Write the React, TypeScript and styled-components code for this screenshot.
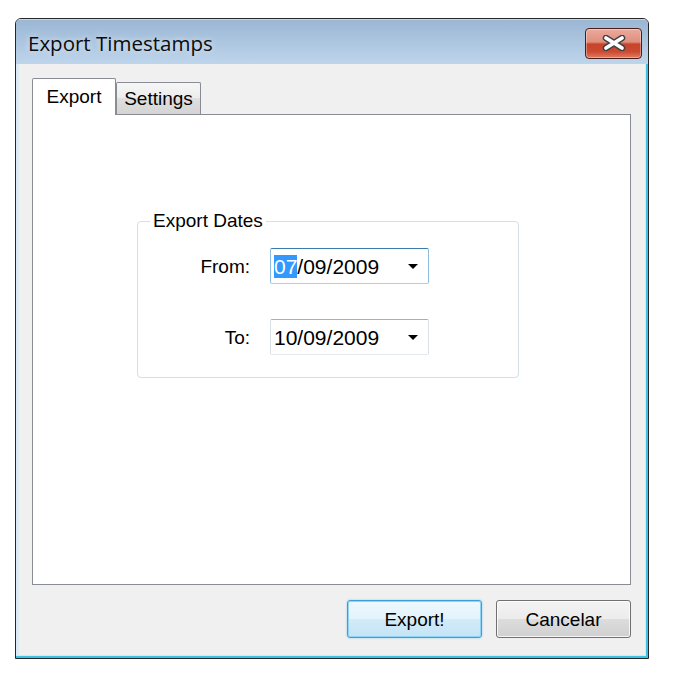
import React from "react";
import styled, { createGlobalStyle, css } from "styled-components";

const Global = createGlobalStyle`
  html, body { margin: 0; padding: 0; background: #fff; }
  body { font-family: "Liberation Sans", Arial, sans-serif; color: #000; }
  * { box-sizing: border-box; }
`;

const Page = styled.div`
  padding: 18px 0 0 15px;
`;

const Window = styled.div`
  width: 634px;
  height: 641px;
  border: 1px solid #262626;
  border-radius: 6px 6px 0 0;
  display: flex;
  flex-direction: column;
  overflow: hidden;
  background: #f0f0f0;
`;

const TitleBar = styled.div`
  height: 45px;
  flex: none;
  display: flex;
  align-items: center;
  justify-content: space-between;
  padding: 3px 6px 0 12px;
  background: linear-gradient(#9ab6d4, #bed5eb);
  box-shadow: inset 0 1px 0 rgba(255, 255, 255, 0.45);
`;

const Title = styled.div`
  font-family: "Open Sans", "Noto Sans", sans-serif;
  font-size: 20.5px;
  color: #0c0c0c;
  text-shadow: 0 0 6px rgba(255, 255, 255, 0.7);
`;

const CloseButton = styled.div`
  width: 57px;
  height: 31px;
  border: 1px solid #4a1d1d;
  border-radius: 4px;
  display: flex;
  align-items: center;
  justify-content: center;
  background: linear-gradient(
    #eaaa9c 0%,
    #df8f7d 45%,
    #c7432a 52%,
    #cb4a30 78%,
    #e07d62 100%
  );
  box-shadow: inset 0 0 0 1px rgba(255, 255, 255, 0.35);
`;

const Client = styled.div`
  flex: 1;
  display: flex;
  flex-direction: column;
  padding: 14px 17px 20px 16px;
  box-shadow: inset 0 -2px 0 #39c3e6, inset -2px 0 0 #39c3e6,
    inset 0 -3px 0 #d9e7f4, inset -3px 0 0 #d9e7f4, inset 3px 0 0 #dde9f5;
`;

const TabStrip = styled.div`
  display: flex;
  align-items: flex-end;
  height: 36px;
  flex: none;
  position: relative;
  z-index: 1;
`;

const Tab = styled.div<{ $active?: boolean }>`
  display: flex;
  align-items: center;
  justify-content: center;
  font-size: 19px;
  border: 1px solid #898c95;
  border-bottom: none;
  border-radius: 2px 2px 0 0;
  ${(p) =>
    p.$active
      ? css`
          width: 84px;
          height: 37px;
          margin-bottom: -1px;
          background: #fff;
          padding-bottom: 1px;
        `
      : css`
          width: 85px;
          height: 32px;
          background: linear-gradient(#f6f6f6, #ececec 50%, #dfdfdf 50%, #d4d4d4);
        `}
`;

const Panel = styled.div`
  flex: none;
  width: 599px;
  height: 471px;
  background: #fff;
  border: 1px solid #898c95;
`;

const Group = styled.fieldset`
  margin: 95px 0 0 104px;
  padding: 16px 0 0 0;
  width: 382px;
  height: 168px;
  border: 1px solid #d5dfe5;
  border-radius: 4px;
  min-width: 0;
`;

const Legend = styled.legend`
  font-size: 19px;
  line-height: 22px;
  padding: 0 3px;
  margin-left: 12px;
`;

const FieldGrid = styled.div`
  display: grid;
  grid-template-columns: 112px 159px;
  grid-auto-rows: 36px;
  column-gap: 20px;
  row-gap: 35px;
`;

const Label = styled.div`
  font-size: 19px;
  text-align: right;
  align-self: center;
  padding-top: 2px;
`;

const Picker = styled.div<{ $focused?: boolean }>`
  display: flex;
  align-items: center;
  justify-content: space-between;
  padding: 1px 10px 0 3px;
  border: 1px solid;
  border-radius: 2px;
  border-color: ${(p) =>
    p.$focused
      ? "#3d7bad #8fbde0 #a9d1ea #8fbde0"
      : "#abadb3 #dbdfe6 #e3e9ef #dbdfe6"};
  background: #fff;
  font-size: 21px;
`;

const Selected = styled.span`
  background: #3399ff;
  color: #fff;
`;

const Arrow = styled.span`
  width: 0;
  height: 0;
  border-left: 5px solid transparent;
  border-right: 5px solid transparent;
  border-top: 5px solid #000;
`;

const ButtonRow = styled.div`
  display: flex;
  justify-content: flex-end;
  gap: 14px;
  margin-top: 15px;
`;

const Button = styled.button<{ $default?: boolean }>`
  width: 135px;
  height: 38px;
  font-family: "Liberation Sans", Arial, sans-serif;
  font-size: 19px;
  color: #000;
  padding: 2px 0 0;
  border-radius: 3px;
  border: 1px solid ${(p) => (p.$default ? "#3c9fd8" : "#707070")};
  background: ${(p) =>
    p.$default
      ? "linear-gradient(#eef8fd, #e3f3fc 50%, #d2ebf9 50%, #c4e4f6)"
      : "linear-gradient(#f3f3f3, #ececec 50%, #dddddd 50%, #d0d0d0)"};
  box-shadow: ${(p) =>
    p.$default
      ? "inset 0 0 0 1px #8fd3f5, 0 0 2px rgba(60, 170, 230, 0.6)"
      : "inset 0 0 0 1px rgba(255, 255, 255, 0.8)"};
`;

function CloseGlyph() {
  return (
    <svg width="24" height="16" viewBox="0 0 24 16">
      <path
        d="M4 3 L20 13 M20 3 L4 13"
        stroke="#3f3f46"
        strokeWidth="6.5"
        strokeLinecap="round"
        fill="none"
      />
      <path
        d="M4 3 L20 13 M20 3 L4 13"
        stroke="#fff"
        strokeWidth="3.8"
        strokeLinecap="round"
        fill="none"
      />
    </svg>
  );
}

export default function App() {
  return (
    <>
      <Global />
      <Page>
        <Window>
          <TitleBar>
            <Title>Export Timestamps</Title>
            <CloseButton>
              <CloseGlyph />
            </CloseButton>
          </TitleBar>
          <Client>
            <TabStrip>
              <Tab $active>Export</Tab>
              <Tab>Settings</Tab>
            </TabStrip>
            <Panel>
              <Group>
                <Legend>Export Dates</Legend>
                <FieldGrid>
                  <Label>From:</Label>
                  <Picker $focused>
                    <span>
                      <Selected>07</Selected>/09/2009
                    </span>
                    <Arrow />
                  </Picker>
                  <Label>To:</Label>
                  <Picker>
                    <span>10/09/2009</span>
                    <Arrow />
                  </Picker>
                </FieldGrid>
              </Group>
            </Panel>
            <ButtonRow>
              <Button $default>Export!</Button>
              <Button>Cancelar</Button>
            </ButtonRow>
          </Client>
        </Window>
      </Page>
    </>
  );
}
